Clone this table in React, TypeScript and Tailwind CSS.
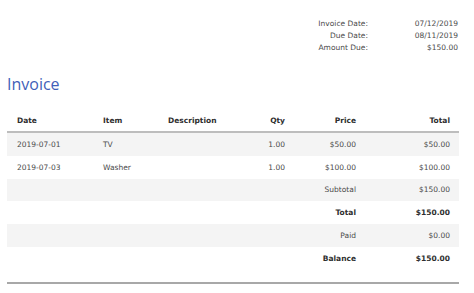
import React from "react";

const body = "font-['DejaVu_Sans',sans-serif]";

type Row = {
  date?: string;
  item?: string;
  desc?: string;
  qty?: string;
  price: string;
  total: string;
  bold?: boolean;
  shade: boolean;
};

const rows: Row[] = [
  { date: "2019-07-01", item: "TV", qty: "1.00", price: "$50.00", total: "$50.00", shade: true },
  { date: "2019-07-03", item: "Washer", qty: "1.00", price: "$100.00", total: "$100.00", shade: false },
  { price: "Subtotal", total: "$150.00", shade: true },
  { price: "Total", total: "$150.00", bold: true, shade: false },
  { price: "Paid", total: "$0.00", shade: true },
  { price: "Balance", total: "$150.00", bold: true, shade: false },
];

const cols = "grid grid-cols-[86px_65px_72px_65px_71px_93px]";

export default function App() {
  return (
    <div className={`w-[474px] h-[293px] bg-white pt-[18px] pl-[7px] pr-[15px] ${body} text-[7.5px] text-[#4a4a4a]`}>
      <div className="flex justify-end pr-[1px]">
        <div className="grid grid-cols-[auto_90px] leading-[12px]">
          <div className="text-right">Invoice Date:</div>
          <div className="text-right">07/12/2019</div>
          <div className="text-right">Due Date:</div>
          <div className="text-right">08/11/2019</div>
          <div className="text-right">Amount Due:</div>
          <div className="text-right">$150.00</div>
        </div>
      </div>
      <div className="mt-[20px] h-[20px] leading-[20px] text-[16px] font-['Open_Sans',sans-serif] text-[#3f5fb8]">
        Invoice
      </div>
      <div className="mt-[16px]">
        <div className={`${cols} h-[23px] items-center font-bold text-[#2e2e2e] border-b-2 border-[#bdbdbd]`}>
          <div className="pl-[10px]">Date</div>
          <div className="pl-[10px]">Item</div>
          <div className="pl-[10px]">Description</div>
          <div className="text-right pr-[10px]">Qty</div>
          <div className="text-right pr-[10px]">Price</div>
          <div className="text-right pr-[9px]">Total</div>
        </div>
        {rows.map((r, i) => (
          <div
            key={i}
            className={`${cols} h-[22.8px] items-center ${r.shade ? "bg-[#f4f4f4]" : "bg-white"} ${r.bold ? "font-bold text-[#2e2e2e]" : ""}`}
          >
            <div className="pl-[10px]">{r.date ?? ""}</div>
            <div className="pl-[10px]">{r.item ?? ""}</div>
            <div className="pl-[10px]">{r.desc ?? ""}</div>
            <div className="text-right pr-[10px]">{r.qty ?? ""}</div>
            <div className="text-right pr-[10px]">{r.price}</div>
            <div className="text-right pr-[9px]">{r.total}</div>
          </div>
        ))}
        <div className="h-[12px]" />
        <div className="h-[2px] bg-[#a8a8a8]" />
      </div>
    </div>
  );
}
